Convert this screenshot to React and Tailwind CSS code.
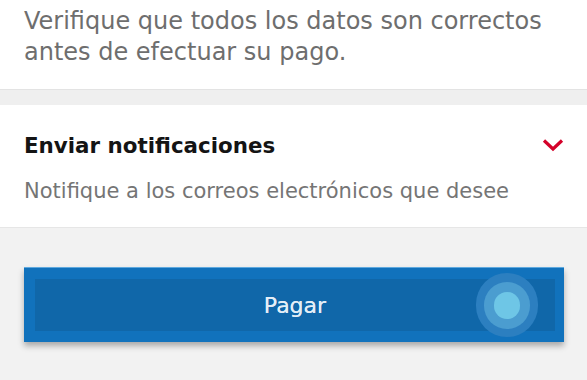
import React from "react";

export default function App() {
  return (
    <div className="w-[587px] h-[380px] overflow-hidden bg-[#f2f2f2] font-['DejaVu_Sans','Roboto',sans-serif]">
      {/* Intro */}
      <div className="bg-white pt-[6px] pb-[21px] px-6">
        <p className="text-[24px] leading-[31px] text-[#6e6e6e]">
          Verifique que todos los datos son correctos antes de efectuar su pago.
        </p>
      </div>

      {/* Separator band */}
      <div className="h-[16px] bg-[#efefef] border-t border-[#e3e3e3]" />

      {/* Notifications */}
      <div className="bg-white pt-[27px] pb-[22px] px-6">
        <div className="flex items-center justify-between h-[28px]">
          <span className="text-[21.4px] leading-[28px] font-bold text-[#141414]">
            Enviar notificaciones
          </span>
          <svg width="22" height="14" viewBox="0 0 22 14" className="mr-[-1px] mt-[-3px]">
            <path d="M2 2.5 L11 11 L20 2.5" fill="none" stroke="#d4022a" strokeWidth="3.2" />
          </svg>
        </div>
        <p className="mt-[17px] text-[21px] leading-[28px] text-[#757575]">
          Notifique a los correos electrónicos que desee
        </p>
      </div>

      {/* Pay */}
      <div className="border-t border-[#e6e6e6] pt-[39px] pl-6 pr-[23px]">
        <button className="relative w-full h-[75px] bg-[#1172bc] p-[12px_9px_11px_11px] shadow-[inset_0_1px_0_#5fa9de,0_4px_6px_rgba(0,0,0,0.3)]">
          <div className="relative h-full bg-[#1067a9] flex items-center justify-center">
            <span className="text-[22px] text-[#e3eef7] [text-shadow:0_0_0.4px_#e3eef7]">Pagar</span>
            <div className="absolute left-[441px] top-[-6px] w-[62px] h-[64px] rounded-full bg-[#2c7fc0] flex items-center justify-center">
              <div className="w-[46px] h-[47px] rounded-full bg-[#4b9dd0] flex items-center justify-center">
                <div className="w-[26px] h-[27px] rounded-full bg-[#6ec6e6]" />
              </div>
            </div>
          </div>
        </button>
      </div>
    </div>
  );
}
